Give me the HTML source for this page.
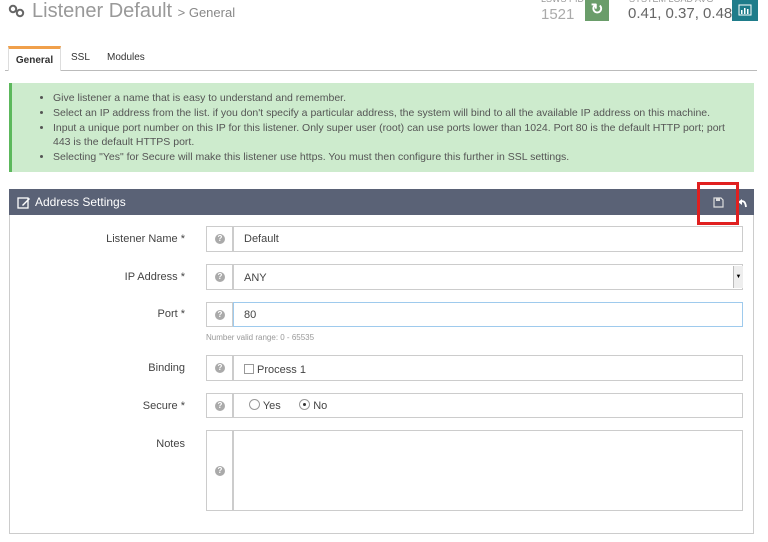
<!DOCTYPE html>
<html><head><style>
body{margin:0;width:768px;height:542px;background:#fff;font-family:"Liberation Sans",sans-serif;position:relative;overflow:hidden;color:#555}
.a{position:absolute}
.lbl{position:absolute;right:583px;font-size:11px;color:#444;text-align:right;white-space:nowrap}
.add{position:absolute;left:206px;width:27px;border:1px solid #ccc;background:#fff;box-sizing:border-box}
.add i{position:absolute;left:8px;top:50%;margin-top:-5px;width:10px;height:10px;border-radius:50%;background:#aaa;color:#fff;font-size:8px;line-height:10px;text-align:center;font-style:normal;font-weight:bold}
.inp{position:absolute;left:233px;width:510px;border:1px solid #ccc;box-sizing:border-box;font-size:11px;color:#444;padding-left:10px}
</style></head><body>
<svg class="a" style="left:8px;top:4px" width="18" height="14" viewBox="0 0 18 14"><circle cx="5" cy="5" r="3.2" fill="none" stroke="#666" stroke-width="2"/><circle cx="12" cy="9" r="3.2" fill="none" stroke="#666" stroke-width="2"/></svg>
<div class="a" style="left:32px;top:0px;font-size:20px;color:#999;font-weight:300">Listener Default <span style="font-size:13px;color:#888">&gt; General</span></div>
<div class="a" style="left:541px;top:-6px;font-size:9px;color:#999">LSWS PID</div>
<div class="a" style="left:541px;top:6px;font-size:15px;color:#aaa">1521</div>
<div class="a" style="left:585px;top:0;width:24px;height:21px;background:#6a9d6a;color:#fff;text-align:center;font-size:15px;line-height:20px;font-weight:bold">↻</div>
<div class="a" style="left:629px;top:-6px;font-size:9px;color:#999">SYSTEM LOAD AVG</div>
<div class="a" style="left:628px;top:5px;font-size:15px;color:#666">0.41, 0.37, 0.48</div>
<div class="a" style="left:732px;top:0;width:26px;height:21px;background:#1f7c8a"><svg width="26" height="21"><rect x="7" y="5" width="12" height="10" fill="none" stroke="#fff"/><rect x="9" y="10" width="1.5" height="4" fill="#fff"/><rect x="12" y="8" width="1.5" height="6" fill="#fff"/><rect x="15" y="9" width="1.5" height="5" fill="#fff"/></svg></div>
<div class="a" style="left:5px;top:70px;width:752px;height:1px;background:#bbb"></div>
<div class="a" style="left:8px;top:46px;width:53px;height:25px;background:#fff;border-top:3px solid #f0a04b;border-left:1px solid #ddd;border-right:1px solid #ddd;box-sizing:border-box;font-size:10px;font-weight:bold;color:#333;text-align:center;line-height:24px">General</div>
<div class="a" style="left:71px;top:52px;font-size:10px;color:#333">SSL</div>
<div class="a" style="left:107px;top:52px;font-size:10px;color:#333">Modules</div>
<div class="a" style="left:9px;top:83px;width:745px;height:89px;background:#cdebcd;border-left:3px solid #5cb85c;box-sizing:border-box"></div>
<ul class="a" style="left:0;top:91px;margin:0;padding-left:53px;font-size:10.5px;line-height:14.8px;color:#555;width:710px;white-space:nowrap">
<li>Give listener a name that is easy to understand and remember.</li>
<li>Select an IP address from the list. if you don't specify a particular address, the system will bind to all the available IP address on this machine.</li>
<li>Input a unique port number on this IP for this listener. Only super user (root) can use ports lower than 1024. Port 80 is the default HTTP port; port<br>443 is the default HTTPS port.</li>
<li>Selecting "Yes" for Secure will make this listener use https. You must then configure this further in SSL settings.</li>
</ul>
<div class="a" style="left:9px;top:189px;width:745px;height:345px;border:1px solid #ccc;box-sizing:border-box"></div>
<div class="a" style="left:9px;top:189px;width:745px;height:26px;background:#5a6276"></div>
<svg class="a" style="left:17px;top:196px" width="14" height="13"><rect x="1" y="2" width="10" height="10" fill="none" stroke="#fff" stroke-width="1.3"/><path d="M5 9 L12 2 L13 3 L6 10 Z" fill="#fff"/></svg>
<div class="a" style="left:35px;top:195px;font-size:12px;color:#fff">Address Settings</div>
<svg class="a" style="left:713px;top:197px" width="11" height="11"><path d="M1 1H8L10 3V10H1Z" fill="none" stroke="#ddd" stroke-width="1.2"/><rect x="3" y="1" width="4" height="3" fill="#ddd"/></svg>
<svg class="a" style="left:738px;top:198px" width="10" height="10"><path d="M2 4 Q7 1 8 9" fill="none" stroke="#fff" stroke-width="1.8"/><path d="M0 4 L4 1 L4 7Z" fill="#fff"/></svg>
<div class="a" style="left:697px;top:182px;width:42px;height:43px;border:3px solid #e02020;box-sizing:border-box"></div>

<div class="lbl" style="top:233px">Listener Name *</div>
<div class="add" style="top:226px;height:26px"><i>?</i></div>
<div class="inp" style="top:226px;height:26px;line-height:24px">Default</div>

<div class="lbl" style="top:271px">IP Address *</div>
<div class="add" style="top:264px;height:26px"><i>?</i></div>
<div class="inp" style="top:264px;height:26px;line-height:26px">ANY</div>
<div class="a" style="left:733px;top:266px;width:9px;height:22px;background:#eee;border-left:1px solid #bbb;font-size:6px;text-align:center;line-height:22px;color:#000">▼</div>

<div class="lbl" style="top:308px">Port *</div>
<div class="add" style="top:302px;height:25px"><i>?</i></div>
<div class="inp" style="top:302px;height:25px;line-height:24px;border-color:#9ecaed">80</div>
<div class="a" style="left:206px;top:333px;font-size:8px;color:#999">Number valid range: 0 - 65535</div>

<div class="lbl" style="top:362px">Binding</div>
<div class="add" style="top:355px;height:26px"><i>?</i></div>
<div class="inp" style="top:355px;height:26px;line-height:28px"><span style="display:inline-block;width:8px;height:8px;border:1px solid #999;vertical-align:-1px"></span> Process 1</div>

<div class="lbl" style="top:400px">Secure *</div>
<div class="add" style="top:393px;height:25px"><i>?</i></div>
<div class="inp" style="top:393px;height:25px;line-height:25px;padding-left:15px"><span style="display:inline-block;width:9px;height:9px;border:1px solid #999;border-radius:50%;vertical-align:-1px"></span> Yes &nbsp;&nbsp;&nbsp;&nbsp; <span style="display:inline-block;width:9px;height:9px;border:1px solid #999;border-radius:50%;vertical-align:-1px;position:relative"><span style="position:absolute;left:3px;top:3px;width:3px;height:3px;border-radius:50%;background:#333"></span></span> No</div>

<div class="lbl" style="top:438px">Notes</div>
<div class="add" style="top:430px;height:81px"><i>?</i></div>
<div class="inp" style="top:430px;height:81px"></div>
</body></html>
